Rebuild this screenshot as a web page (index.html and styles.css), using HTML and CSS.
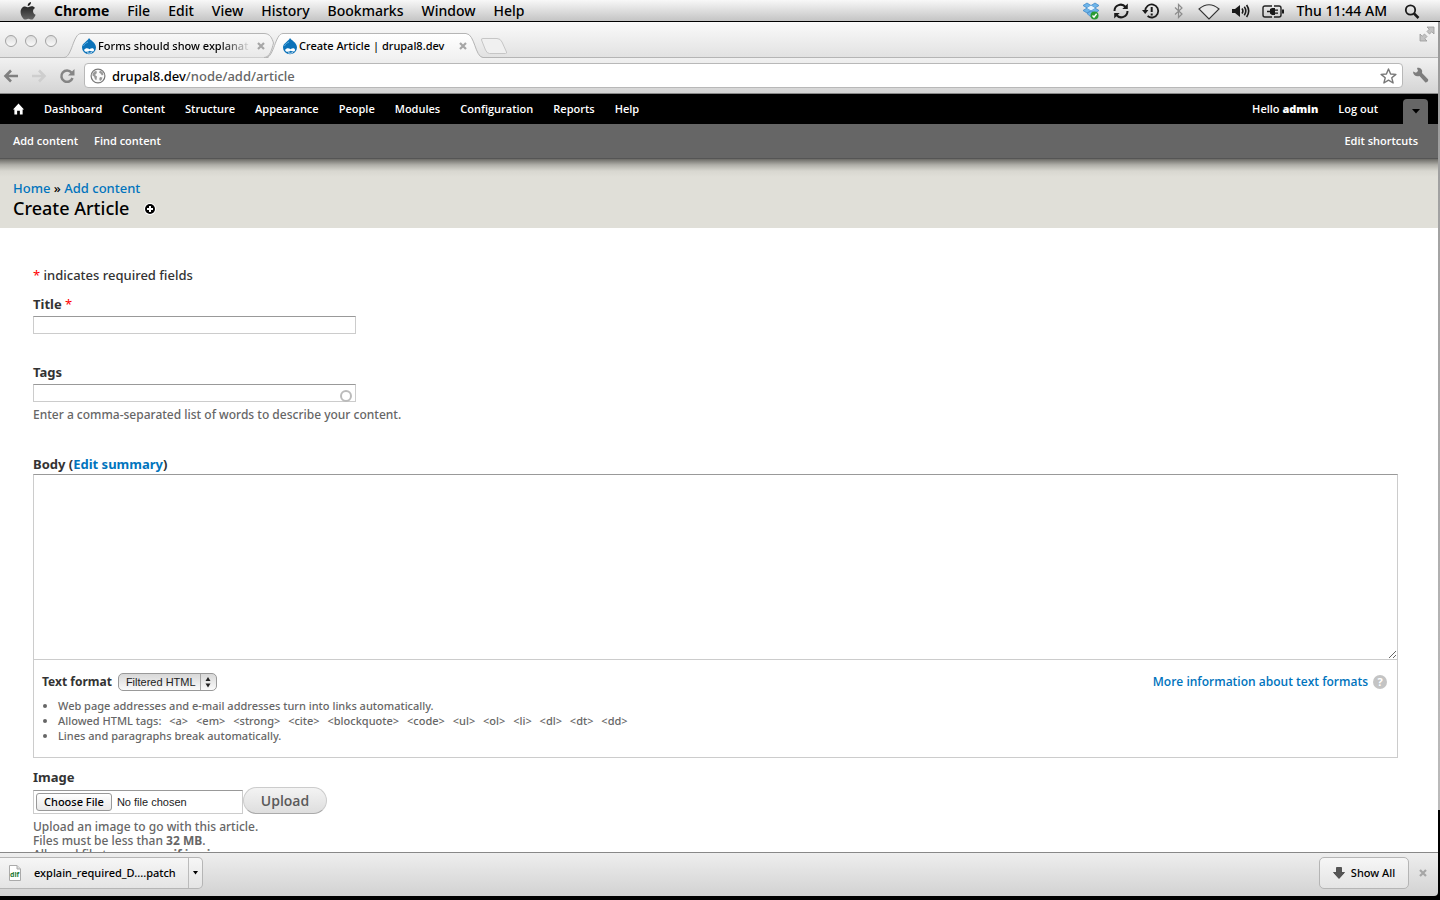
FILE: index.html
```html
<!DOCTYPE html>
<html lang="en">
<head>
<meta charset="utf-8">
<title>Create Article | drupal8.dev</title>
<link rel="stylesheet" href="styles.css">
</head>
<body>
<svg class="defs" aria-hidden="true">
  <defs>
    <linearGradient id="tabFill" x1="0" y1="0" x2="0" y2="1"><stop offset="0" stop-color="#fff"/><stop offset="1" stop-color="#f1f1f1"/></linearGradient>
    <linearGradient id="tabBack" x1="0" y1="0" x2="0" y2="1"><stop offset="0" stop-color="#f8f8f8"/><stop offset="1" stop-color="#e9e9e9"/></linearGradient>
    <linearGradient id="appleFill" x1="0" y1="0" x2="0" y2="1"><stop offset="0" stop-color="#111"/><stop offset="1" stop-color="#666"/></linearGradient>
    <symbol id="drop" viewBox="0 0 16 18">
      <path d="M8 1C9 3 15 5.500 15 10.500A7 6.700 0 0 1 1 10.500C1 6 6.500 4.500 8 1z" fill="#0b72b9"/>
      <path d="M3 13c1.500-2.500 4-2 5.500-.8C10 11 13 10.500 13 13c0 2-2.500 1.800-4.300.8C7 15 4 15.500 3 13z" fill="#fff"/>
      <path d="M6 15.800q2.500 1 5-.2" fill="none" stroke="#fff" stroke-width=".8"/>
      <path d="M2.500 9C3 7 5 6 7 5" fill="none" stroke="#5aaee0" stroke-width="1"/>
    </symbol>
    <symbol id="cross" viewBox="0 0 8 8"><path d="M1 1l6 6M7 1L1 7" stroke="#a6a6a6" stroke-width="2.200" fill="none"/></symbol>
  </defs>
</svg>

<header class="menubar">
  <svg class="apple" width="16" height="18" viewBox="0 0 16 18" aria-label="Apple"><path d="M11 0c.2 2-1.500 4-3.300 4C7.500 2 9.200.3 11 0zM8.200 5.200c.8 0 1.800-1 3.500-1 1.400 0 2.600.7 3.300 1.700-2.900 1.700-2.400 5.700.6 6.800-.6 1.800-2.200 4.900-4 4.900-1.200 0-1.700-.8-3.200-.8s-2 .8-3.100.8C3.100 17.600.6 13.500.6 10c0-3.600 2.200-5.600 4.400-5.600 1.400 0 2.500.8 3.200.8z" fill="url(#appleFill)"/></svg>
  <nav class="menus">
    <a href="#" class="app">Chrome</a><a href="#">File</a><a href="#">Edit</a><a href="#">View</a><a href="#">History</a><a href="#">Bookmarks</a><a href="#">Window</a><a href="#">Help</a>
  </nav>
  <div class="status">
    <svg width="18" height="18" viewBox="0 0 18 18"><g fill="#6db5ea" stroke="#3a83c4" stroke-width=".7"><path d="M5 1l4 2.500L5 6 1 3.500z"/><path d="M13 1l4 2.500L13 6 9 3.500z"/><path d="M5 6l4 2.500L5 11 1 8.500z"/><path d="M13 6l4 2.500-4 2.500-4-2.500z"/><path d="M5 11.500L9 9l4 2.500L9 15z"/></g><path d="M9 3.500L13 6 9 8.500 5 6z" fill="#e6f4fd"/><circle cx="12.500" cy="13.500" r="4" fill="#2b9a32"/><path d="M10.500 13.500l1.500 1.700 2.600-3.400" stroke="#fff" stroke-width="1.400" fill="none"/></svg>
    <svg width="18" height="18" viewBox="0 0 18 18" fill="none" stroke="#1a1a1a" stroke-width="2"><path d="M2.500 9A6.200 6.200 0 0 1 13.500 5M15.500 9A6.200 6.200 0 0 1 4.500 13"/><path d="M15.800 1.500V7H10.300zM2.200 16.500V11H7.700z" fill="#1a1a1a" stroke="none"/></svg>
    <svg width="18" height="18" viewBox="0 0 18 18" fill="none" stroke="#1a1a1a" stroke-width="1.800"><path d="M3.200 9a6.500 6.500 0 1 1 2.400 5"/><path d="M0 8h6.400L3.200 12z" fill="#1a1a1a" stroke="none"/><path d="M9.700 5v5M9.700 11.500v2" stroke-width="2"/></svg>
    <svg class="bluetooth" width="10" height="18" viewBox="0 0 10 18" fill="none" stroke="#8c8c8c" stroke-width="1.200"><path d="M1 5.500l7 6.500-3.500 3.500v-13L8 6l-7 6.500"/></svg>
    <svg width="22" height="18" viewBox="0 0 22 18"><path d="M1 7Q11-1.500 21 7L11 17z" fill="#e9e9e9" stroke="#333" stroke-width="1.100"/></svg>
    <svg width="18" height="18" viewBox="0 0 18 18" fill="none" stroke="#1a1a1a" stroke-width="1.600"><path d="M0 7h3l5-4v12l-5-4H0z" fill="#1a1a1a" stroke="none"/><path d="M10 6.500q1.800 2.500 0 5M12.300 4.800q3 4.200 0 8.400M14.600 3q4.200 6 0 12"/></svg>
    <svg width="22" height="18" viewBox="0 0 22 18"><path d="M10 4H3Q1 4 1 6v7q0 2 2 2h7M12 4h5q2 0 2 2v7q0 2-2 2h-5" fill="none" stroke="#222" stroke-width="1.400"/><path d="M20 7.500h2v4h-2zM5 8.700h3V7l2-1h3v1.500h3v1.200h-3v1.800h3v1.200h-3V13h-3l-2-1.500v-1.300H5z" fill="#1a1a1a"/></svg>
    <time>Thu 11:44 AM</time>
    <svg width="16" height="18" viewBox="0 0 16 18" fill="none" stroke="#1a1a1a"><circle cx="6.500" cy="8" r="4.700" stroke-width="1.800"/><path d="M10 11.500l4.500 4.500" stroke-width="2.500"/></svg>
  </div>
</header>

<div class="window">
  <div class="tabstrip">
    <div class="lights"><button type="button" aria-label="Close"></button><button type="button" aria-label="Minimize"></button><button type="button" aria-label="Zoom"></button></div>
    <div class="tab">
      <svg class="shape" width="214" height="26" viewBox="0 0 214 26"><path d="M0 24.500C9 24.500 9 1 17 .5H200C208 .5 209 9 210 12 208 17 206 24.500 200 24.500z" fill="url(#tabBack)"/><path d="M0 24.500C8 24.500 9 .5 17 .5H200C206 .5 208 5 209.500 10C208 16 206 24.500 200 24.500" fill="none" stroke="#b5b5b5"/></svg>
      <svg class="fav" width="16" height="18"><use href="#drop"/></svg>
      <span class="label faded">Forms should show explanat</span>
      <button type="button" class="x" aria-label="Close tab"><svg width="8" height="8"><use href="#cross"/></svg></button>
    </div>
    <div class="tab active">
      <svg class="shape" width="220" height="26" viewBox="0 0 220 26"><path d="M0 26C7 25 9 1 17 .5H200C208 1 209 24 217 24.500L220 26z" fill="url(#tabFill)"/><path d="M0 24.500C8 24.500 9 .5 17 .5H200C209 1 209 24 217 24.500H220" fill="none" stroke="#b5b5b5"/></svg>
      <svg class="fav" width="16" height="18"><use href="#drop"/></svg>
      <span class="label">Create Article | drupal8.dev</span>
      <button type="button" class="x" aria-label="Close tab"><svg width="8" height="8"><use href="#cross"/></svg></button>
    </div>
    <button type="button" class="newtab" aria-label="New tab"><svg width="28" height="18" viewBox="0 0 28 18"><path d="M3 1.500H17Q20.500 1.500 22 5L26.500 15Q27 16.500 25.500 16.500H9.500Q7 16.500 5.500 13L1.500 3Q1 1.500 3 1.500z" fill="#f0f0f0" stroke="#c6c6c6"/></svg></button>
    <button type="button" class="full" aria-label="Full screen"><svg width="16" height="16" viewBox="0 0 16 16" fill="#c2c2c2" stroke="#999" stroke-width=".8"><path d="M8 1h7v7l-2.200-2.200L10.500 8 8 5.500l2.200-2.300z"/><path d="M1 8l2.200 2.200L5.500 8 8 10.500l-2.200 2.300L8 15H1z"/></svg></button>
  </div>

  <div class="toolbar">
    <button type="button" aria-label="Back"><svg width="16" height="16" viewBox="0 0 16 16" fill="none" stroke="#808080" stroke-width="2.600"><path d="M15 8H3M8 2.500L2.500 8 8 13.500"/></svg></button>
    <button type="button" aria-label="Forward"><svg width="16" height="16" viewBox="0 0 16 16" fill="none" stroke="#cecece" stroke-width="2.600"><path d="M1 8h12M8 2.500L13.500 8 8 13.500"/></svg></button>
    <button type="button" aria-label="Reload"><svg width="16" height="16" viewBox="0 0 16 16"><path d="M12.500 4.500A5.700 5.700 0 1 0 13.500 10" fill="none" stroke="#858585" stroke-width="2.500"/><path d="M15.500 1v6.500H9z" fill="#858585"/></svg></button>
    <div class="omnibox">
      <svg width="16" height="16" viewBox="0 0 16 16"><circle cx="8" cy="8" r="6.900" fill="#fafafa" stroke="#777" stroke-width="1.200"/><path d="M2.500 5.500L5 3l2 .5-.5 2L5 7l2 1.500L6.500 12 5 11.500 4 8.500 2.500 7.500zM10 2.500l2.500 1.500 1 2.500-1.500 1-1.500-2L9 4.500zM10 9l2.500.5-1 2.500-1.500 1-.8-2z" fill="#999"/></svg>
      <span class="url"><b>drupal8.dev</b>/node/add/article</span>
      <button type="button" aria-label="Bookmark"><svg width="17" height="16" viewBox="0 0 17 16"><path d="M8.500 1l2.100 5 5.300.4-4.100 3.400 1.300 5.200-4.600-2.900L3.900 15l1.300-5.200L1.100 6.400 6.400 6z" fill="#fff" stroke="#777" stroke-width="1.400" stroke-linejoin="round"/></svg></button>
    </div>
    <button type="button" class="wrench" aria-label="Settings"><svg width="17" height="17" viewBox="0 0 17 17"><path d="M1 4.500l3 1.200 2-1.800L5 1C8 .2 11 2.500 10 6l6 6.200c1 1.300-1.200 4-2.800 3L7.500 9C4 10 1 8 1 4.500z" fill="#7d7d7d"/></svg></button>
  </div>

  <main class="page">
    <nav class="adminbar">
      <a href="#" aria-label="Home" class="home"><svg width="11" height="12" viewBox="0 0 12 12"><path d="M6 0l6 6.500h-1.500V12h-3V8h-3v4h-3V6.500H0z" fill="#fff"/></svg></a>
      <a href="#">Dashboard</a><a href="#">Content</a><a href="#">Structure</a><a href="#">Appearance</a><a href="#">People</a><a href="#">Modules</a><a href="#">Configuration</a><a href="#">Reports</a><a href="#">Help</a>
      <span class="hello">Hello <b>admin</b></span>
      <a href="#">Log out</a>
      <button type="button" class="toggle" aria-label="Toggle shortcuts"><svg width="8" height="5" viewBox="0 0 8 5"><path d="M0 0h8L4 4.500z"/></svg></button>
    </nav>
    <nav class="shortcuts"><a href="#">Add content</a><a href="#">Find content</a><a href="#" class="edit">Edit shortcuts</a></nav>

    <header class="branding">
      <nav class="crumbs"><a href="#">Home</a> » <a href="#">Add content</a></nav>
      <h1>Create Article <button type="button" aria-label="Add to shortcuts"><svg width="12" height="14" viewBox="0 0 12 14"><circle cx="6" cy="8" r="6" fill="#fff"/><circle cx="6" cy="8" r="5"/><path d="M6 5v6M3 8h6" stroke="#fff" stroke-width="2"/></svg></button></h1>
    </header>

    <form class="node-form">
      <p class="note"><span class="req">*</span> indicates required fields</p>
      <div class="item">
        <label for="title">Title <span class="req">*</span></label>
        <input type="text" id="title" class="field">
      </div>
      <div class="item tags">
        <label for="tags">Tags</label>
        <div class="field-wrap"><input type="text" id="tags" class="field"><i class="throbber"></i></div>
        <p class="desc">Enter a comma-separated list of words to describe your content.</p>
      </div>
      <div class="item body-item">
        <label for="body">Body (<a href="#">Edit summary</a>)</label>
        <textarea id="body"></textarea>
        <div class="format">
          <div class="format-row">
            <label for="format">Text format</label>
            <span class="select"><select id="format"><option>Filtered HTML</option></select><svg width="16" height="16" viewBox="0 0 16 16"><path d="M.5 0v16" stroke="#a5a5a5"/><path d="M5.500 7L8 3l2.500 4zM5.500 9.500h5l-2.500 4z" fill="#222"/></svg></span>
            <a href="#" class="more">More information about text formats <i class="help">?</i></a>
          </div>
          <ul>
            <li>Web page addresses and e-mail addresses turn into links automatically.</li>
            <li>Allowed HTML tags: <code>&lt;a&gt;</code> <code>&lt;em&gt;</code> <code>&lt;strong&gt;</code> <code>&lt;cite&gt;</code> <code>&lt;blockquote&gt;</code> <code>&lt;code&gt;</code> <code>&lt;ul&gt;</code> <code>&lt;ol&gt;</code> <code>&lt;li&gt;</code> <code>&lt;dl&gt;</code> <code>&lt;dt&gt;</code> <code>&lt;dd&gt;</code></li>
            <li>Lines and paragraphs break automatically.</li>
          </ul>
        </div>
      </div>
      <div class="item image-item">
        <label for="image">Image</label>
        <div class="upload"><input type="file" id="image"><button type="button">Upload</button></div>
        <p class="desc files">Upload an image to go with this article.<br>Files must be less than <b>32 MB</b>.<br>Allowed file types: <b>png gif jpg jpeg</b>.</p>
      </div>
    </form>
  </main>

  <footer class="downloads">
    <div class="download">
      <button type="button" class="file"><svg width="12" height="16" viewBox="0 0 12 16"><path d="M.5.500h7.500L11.500 4v11.500H.5z" fill="#fff" stroke="#aaa"/><path d="M8 .5V4h3.500" fill="#ddd" stroke="#aaa"/><text x="1" y="12" class="ext">dif</text></svg>explain_required_D....patch</button>
      <button type="button" class="arrow" aria-label="Download options"><svg width="5" height="4" viewBox="0 0 5 4"><path d="M0 0h5L2.500 3.500z"/></svg></button>
    </div>
    <button type="button" class="showall"><svg width="12" height="12" viewBox="0 0 12 12"><path d="M3.500.5h5v5h3L6 11.500.5 5.500h3z" fill="#555" stroke="#333" stroke-width=".7"/></svg>Show All</button>
    <button type="button" class="x" aria-label="Close downloads"><svg width="8" height="8"><use href="#cross"/></svg></button>
  </footer>
</div>
</body>
</html>
```
FILE: styles.css
```css
* { box-sizing: border-box; }
html, body { height: 100%; }
body {
  margin: 0;
  display: flex;
  flex-direction: column;
  overflow: hidden;
  background: linear-gradient(#999 0, #bbb 90%, #000 90%);
  font: 500 13px/16px "Noto Sans", "Open Sans", sans-serif;
  color: #222;
}
.defs { position: absolute; width: 0; height: 0; }
svg { display: block; flex: none; }
button { padding: 0; border: 0; background: none; font: inherit; color: inherit; }
a { color: #0074bd; text-decoration: none; }
p, h1, ul { margin: 0; padding: 0; }

/* System menu bar */
.menubar {
  flex: none;
  display: flex;
  align-items: center;
  height: 22px;
  padding: 0 20px;
  border-bottom: 1px solid #000;
  background: linear-gradient(#f8f8f8, #c4c4c4);
  font-size: 14px;
}
.menus { display: flex; gap: 18px; margin-left: 18px; }
.menus a, .menubar time { color: #000; white-space: nowrap; }
.menus .app { font-family: "Open Sans", sans-serif; font-weight: 700; }
.status { display: flex; align-items: center; gap: 12px; margin-left: auto; }
.bluetooth { margin: 0 2px; }
.status time { margin-right: 5px; }

/* Browser window */
.window {
  flex: 1;
  min-height: 0;
  display: flex;
  flex-direction: column;
  margin-right: 2px;
  border-bottom: 4px solid #000;
}
.tabstrip {
  flex: none;
  display: flex;
  align-items: flex-start;
  height: 36px;
  padding-top: 11px;
  border-bottom: 1px solid #b5b5b5;
  background: linear-gradient(#fafafa, #e2e2e2);
}
.lights { display: flex; gap: 8px; margin: 2px 7px 0 5px; }
.lights button {
  width: 12px;
  height: 12px;
  border: 1px solid #a3a3a3;
  border-radius: 50%;
  background: linear-gradient(#dcdcdc, #fafafa);
}
.tab {
  position: relative;
  display: flex;
  align-items: center;
  width: 207px;
  height: 26px;
  padding: 0 6px 0 17px;
  font-size: 11px;
  color: #000;
  white-space: nowrap;
}
.tab.active { z-index: 1; width: 208px; padding-right: 12px; padding-left: 11px; }
.shape { position: absolute; top: 0; left: 0; }
.tab.active .shape { left: -5px; }
.fav, .label, .tab .x { position: relative; }
.label { flex: 1; margin-left: 1px; overflow: hidden; }
.faded { -webkit-mask-image: linear-gradient(90deg, #000 80%, transparent); mask-image: linear-gradient(90deg, #000 80%, transparent); }
.tab .x { margin-left: 6px; }
.newtab { margin: 4px 0 0 1px; }
.full { margin: -7px 3px 0 auto; }
.toolbar {
  flex: none;
  display: flex;
  align-items: center;
  gap: 12px;
  height: 36px;
  padding: 0 9px 0 3px;
  border-bottom: 1px solid #888;
  background: linear-gradient(#f1f1f1, #d4d4d4);
}
.omnibox {
  flex: 1;
  display: flex;
  align-items: center;
  gap: 6px;
  height: 25px;
  margin-left: -3px;
  padding: 0 5px;
  border: 1px solid #b8b8b8;
  border-radius: 4px;
  background: #fff;
}
.url { flex: 1; color: #666; }
.url b { font-weight: 500; color: #000; }
.wrench { margin-left: -3px; }

/* Page */
.page { flex: 1; min-height: 0; overflow: hidden; background: #fff; }
.adminbar, .shortcuts {
  display: flex;
  align-items: center;
  padding-left: 13px;
  font-family: "Open Sans", sans-serif;
  font-size: 11px;
  font-weight: 600;
}
.adminbar { gap: 20px; height: 30px; padding-right: 10px; background: #000; color: #fff; }
.adminbar a, .shortcuts a { color: #fff; }
.hello { margin-left: auto; }
.toggle {
  display: flex;
  align-items: center;
  justify-content: center;
  align-self: flex-end;
  width: 25px;
  height: 25px;
  margin-left: 5px;
  border-radius: 4px 4px 0 0;
  background: #666;
}
.shortcuts { gap: 16px; height: 35px; padding-right: 20px; border-bottom: 1px solid #555; background: #666; }
.shortcuts .edit { margin-left: auto; }
.branding {
  height: 69px;
  padding: 21px 13px 0;
  background: linear-gradient(#6b6a66 0, #b0afa9 6px, #d8d7d0 12px, #e0dfd8 18px);
  color: #000;
}
.branding h1 { display: flex; align-items: center; gap: 15px; font-size: 18px; line-height: 24px; font-weight: 500; }
.node-form { padding: 39px 40px 0 33px; }
.req { color: #f00; font-weight: 400; }
.item { margin-top: 12px; }
label { display: block; font-weight: 700; line-height: 18px; color: #333; }
.note { color: #333; }
.field, textarea, .upload input {
  display: block;
  margin: 0;
  border: 1px solid #ccc;
  border-top-color: #999;
  border-radius: 0;
  background: #fff;
  outline: 0;
}
.field { width: 323px; height: 18px; margin-top: 3px; }
.item.tags { margin-top: 29px; }
.field-wrap { position: relative; width: 323px; }
.throbber {
  position: absolute;
  right: 4px;
  bottom: 0;
  width: 12px;
  height: 12px;
  border: 2px solid #bbb;
  border-radius: 50%;
}
.desc { margin-top: 5px; font-size: 12px; color: #666; }
.body-item { margin-top: 32px; }
textarea { width: 100%; height: 186px; margin-top: 1px; border-bottom-color: #ccc; resize: vertical; }
.format { height: 98px; padding: 13px 10px 0 8px; border: 1px solid #ccc; border-top: 0; }
.format-row { display: flex; align-items: center; gap: 6px; }
.format-row label { font-size: 12px; }
.select { position: relative; }
.select select {
  display: block;
  width: 99px;
  height: 18px;
  padding: 0 0 0 7px;
  border: 1px solid #999;
  border-radius: 5px;
  appearance: none;
  background: linear-gradient(#d8d8d8, #fafafa);
  font: 11px/14px "Liberation Sans", Arial, sans-serif;
  color: #222;
}
.select svg { position: absolute; top: 1px; right: 1px; pointer-events: none; }
.more { display: flex; align-items: center; gap: 5px; margin-left: auto; font: 600 12px/16px "Open Sans", sans-serif; }
.help {
  width: 14px;
  height: 14px;
  border-radius: 50%;
  background: #c4c4c4;
  color: #fff;
  font: 700 11px/14px "Open Sans", sans-serif;
  text-align: center;
}
.format ul { margin-top: 7px; padding-left: 16px; font-size: 11px; line-height: 15px; color: #666; }
.format code { margin-left: 5px; font: inherit; }
.image-item { margin-top: 10px; }
.upload { display: flex; align-items: flex-end; margin-top: 1px; }
.upload input {
  width: 210px;
  height: 24px;
  padding: 2px;
  font: 11px/18px "Liberation Sans", Arial, sans-serif;
  color: #222;
}
.upload input::file-selector-button {
  height: 18px;
  margin: 0 5px 0 0;
  padding: 0 7px;
  border: 1px solid #999;
  border-radius: 3px;
  background: linear-gradient(#fff, #e8e8e8);
  font: 500 11px/14px "Noto Sans", sans-serif;
  color: #000;
}
.upload button {
  width: 84px;
  height: 27px;
  border: 1px solid #ccc;
  border-bottom-color: #aaa;
  border-radius: 14px;
  background: linear-gradient(#f3f3f3, #dedede);
  font: 600 14px/16px "Open Sans", sans-serif;
  color: #5a5a5a;
}
.files { margin-top: 6px; line-height: 14px; }

/* Download shelf */
.downloads {
  flex: none;
  display: flex;
  align-items: center;
  height: 44px;
  padding: 0 11px 3px 0;
  border-top: 1px solid #888;
  border-bottom-right-radius: 4px;
  background: linear-gradient(#eee, #d2d2d2);
  font-size: 11px;
  color: #000;
}
.download, .showall {
  display: flex;
  align-items: center;
  height: 32px;
  border: 1px solid #b5b5b5;
  border-radius: 5px;
  background: linear-gradient(#f6f6f6, #e4e4e4);
}
.download { width: 203px; border-left: 0; border-radius: 0 5px 5px 0; }
.file { flex: 1; display: flex; align-items: center; gap: 13px; padding-left: 9px; white-space: nowrap; }
.ext { font: 700 7px "Open Sans", sans-serif; fill: #1d7a34; }
.arrow { display: flex; align-items: center; justify-content: center; width: 14px; height: 100%; border-left: 1px solid #bbb; }
.showall { gap: 6px; width: 90px; justify-content: center; margin: 0 10px 0 auto; }
```
